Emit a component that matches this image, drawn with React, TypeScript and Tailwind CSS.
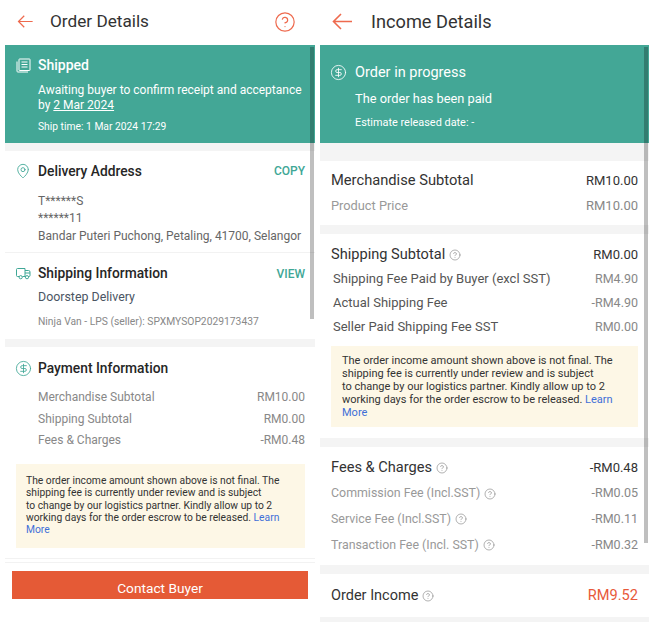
import { CircleDollarSign, CircleHelp, MapPin } from "lucide-react";
import type { ReactNode } from "react";

const font = "font-['Roboto','Liberation_Sans',sans-serif]";

function BackArrow({ className }: { className: string }) {
  return (
    <svg className={`text-[#ee6a4e] ${className}`} viewBox="0 0 20 17" fill="none" stroke="currentColor" strokeWidth="1.6">
      <path d="M20 8.5H1.5M9 1L1.5 8.5L9 16" />
    </svg>
  );
}

function Notice({ className }: { className: string }) {
  return (
    <div className={`bg-[#fdf7e6] text-[#333] ${className}`}>
      <p>The order income amount shown above is not final. The</p>
      <p>shipping fee is currently under review and is subject</p>
      <p>to change by our logistics partner. Kindly allow up to 2</p>
      <p>
        working days for the order escrow to be released. <span className="text-[#3f6fd8]">Learn</span>
      </p>
      <p className="text-[#3f6fd8]">More</p>
    </div>
  );
}

function DocIcon() {
  return (
    <svg width="15" height="15" viewBox="0 0 15 15" fill="none" stroke="currentColor" strokeWidth="1">
      <rect x="3" y="1" width="11" height="11.5" rx="0.5" />
      <path d="M1 3.5V13.2a.8.8 0 0 0 .8.8H12" />
      <path d="M5.5 4h6M5.5 6.5h6M5.5 9h6" />
    </svg>
  );
}

function TruckIcon() {
  return (
    <svg width="15" height="12" viewBox="0 0 15 12" fill="none" stroke="currentColor" strokeWidth="1">
      <path d="M3 8.5H1.5a1 1 0 0 1-1-1V1.5a1 1 0 0 1 1-1H9v8H6.5" />
      <path d="M9 2.5h3.5a1.5 1.5 0 0 1 1.5 1.5v3.5a1 1 0 0 1-1 1h-.5M9.5 8.5H9M9 5h5" />
      <circle cx="4.7" cy="9.2" r="1.6" />
      <circle cx="11" cy="9.2" r="1.6" />
    </svg>
  );
}

function SectionTitle({ icon, title, action }: { icon: ReactNode; title: string; action?: string }) {
  return (
    <div className="flex items-center">
      <span className="flex w-[22px] text-[#3fa796]">{icon}</span>
      <span className="text-[13.8px] font-medium text-[#262626]">{title}</span>
      {action && <span className="ml-auto text-xs font-medium text-[#3fa796]">{action}</span>}
    </div>
  );
}

function Row({ label, value }: { label: string; value: string }) {
  return (
    <div className="flex h-[21.5px] items-center justify-between text-xs text-[#888]">
      <span>{label}</span>
      <span>{value}</span>
    </div>
  );
}

function OrderDetails() {
  return (
    <div className="relative h-[622px] w-[320px] shrink-0 overflow-hidden pr-[5px]">
      <div className="flex h-[43px] items-center pl-[17px] pr-[19px]">
        <BackArrow className="h-[13px] w-[16px]" />
        <h1 className="ml-[17px] text-[17.2px] text-[#333]">Order Details</h1>
        <CircleHelp className="ml-auto size-[22px] text-[#ee6a4e]" strokeWidth={1.3} />
      </div>
      <div className="ml-[5px] mt-[2px] flex h-[98px] flex-col bg-[#43a796] pl-[11px] pt-[10px] text-white">
        <div className="flex items-center">
          <DocIcon />
          <span className="ml-[7px] text-sm font-medium">Shipped</span>
        </div>
        <p className="mt-[8px] pl-[22px] text-xs leading-[15px]">
          Awaiting buyer to confirm receipt and acceptance
          <br />
          by <span className="underline">2 Mar 2024</span>
        </p>
        <p className="mt-[6px] pl-[22px] text-[10.3px]">Ship time: 1 Mar 2024 17:29</p>
      </div>
      <div className="ml-[5px] h-[8px] bg-[#f4f4f4]" />
      <div className="ml-[5px] pl-[11px] pr-[10px] pt-[10px]">
        <SectionTitle icon={<MapPin className="-ml-px size-4" strokeWidth={1.3} />} title="Delivery Address" action="COPY" />
        <div className="mt-[11px] pl-[22px] text-xs leading-[17.5px] text-[#666]">
          <p>T******S</p>
          <p>******11</p>
          <p>Bandar Puteri Puchong, Petaling, 41700, Selangor</p>
        </div>
      </div>
      <div className="ml-[5px] mt-[7px] border-t border-[#f2f2f2] pl-[11px] pr-[10px] pt-[10px]">
        <SectionTitle icon={<TruckIcon />} title="Shipping Information" action="VIEW" />
        <p className="mt-[4px] pl-[22px] text-[12.4px] text-[#4b5563]">Doorstep Delivery</p>
        <p className="mt-[8px] pl-[22px] text-[10.3px] text-[#888]">Ninja Van - LPS (seller): SPXMYSOP2029173437</p>
      </div>
      <div className="ml-[5px] mt-[9px] h-[8px] bg-[#f4f4f4]" />
      <div className="ml-[5px] pl-[11px] pr-[10px] pt-[11px]">
        <SectionTitle icon={<CircleDollarSign className="-ml-px size-[17px]" strokeWidth={1.2} />} title="Payment Information" />
        <div className="mt-[8px] pl-[22px]">
          <Row label="Merchandise Subtotal" value="RM10.00" />
          <Row label="Shipping Subtotal" value="RM0.00" />
          <Row label="Fees & Charges" value="-RM0.48" />
        </div>
        <Notice className="mt-[13px] px-[10px] py-[11px] text-[10.3px] leading-[12.3px]" />
      </div>
      <div className="ml-[5px] mt-[10px] h-[5px] border-y border-[#f2f2f2]" />
      <div className="ml-[12px] mr-[7px] mt-[8px] flex h-[28px] items-end justify-center bg-[#e55a36] text-[13.7px] text-white">
        Contact Buyer
      </div>
      <div className="absolute left-[310px] top-[47px] h-[272px] w-[4px] bg-black/25" />
    </div>
  );
}

function IncomeRow({ label, value }: { label: string; value: string }) {
  return (
    <div className="flex h-[25.6px] items-center justify-between text-[12.4px] text-[#999]">
      <span className="flex items-center gap-1">
        {label}
        <CircleHelp className="size-3 text-[#888]" strokeWidth={1.3} />
      </span>
      <span className="text-[12.5px] text-[#888]">{value}</span>
    </div>
  );
}

function IncomeDetails() {
  return (
    <div className="relative h-[622px] w-[329px] shrink-0 overflow-hidden">
      <div className="flex h-[43px] items-center pl-[12px]">
        <BackArrow className="h-[17px] w-[20px]" />
        <h1 className="ml-[19px] text-[18.2px] text-[#333]">Income Details</h1>
      </div>
      <div className="mt-[2px] flex h-[98px] flex-col bg-[#43a796] pl-[10px] pt-[17px] text-white">
        <div className="flex items-center">
          <CircleDollarSign className="size-[17px]" strokeWidth={1.2} />
          <span className="ml-[8px] text-[14.5px]">Order in progress</span>
        </div>
        <p className="mt-[5px] pl-[25px] text-[12.8px]">The order has been paid</p>
        <p className="mt-[7px] pl-[25px] text-[10.9px]">Estimate released date: -</p>
      </div>
      <div className="h-[18px] bg-[#f4f4f4]" />
      <div className="px-[11px] py-[7px]">
        <div className="flex h-[25px] items-center justify-between text-[14.7px] text-[#333]">
          <span>Merchandise Subtotal</span>
          <span className="text-[13px]">RM10.00</span>
        </div>
        <div className="flex h-[25px] items-center justify-between text-[12.8px] text-[#999]">
          <span>Product Price</span>
          <span className="text-[13px] text-[#888]">RM10.00</span>
        </div>
      </div>
      <div className="h-[9px] bg-[#f4f4f4]" />
      <div className="px-[11px] pt-[9px]">
        <div className="flex h-[24px] items-center justify-between text-[14.6px] text-[#333]">
          <span className="flex items-center gap-1">
            Shipping Subtotal
            <CircleHelp className="size-3 text-[#888]" strokeWidth={1.3} />
          </span>
          <span className="text-[13px]">RM0.00</span>
        </div>
        <div className="pl-[2px]">
          {[
            ["Shipping Fee Paid by Buyer (excl SST)", "RM4.90"],
            ["Actual Shipping Fee", "-RM4.90"],
            ["Seller Paid Shipping Fee SST", "RM0.00"],
          ].map(([label, value]) => (
            <div key={label} className="flex h-[24px] items-center justify-between text-[13px] text-[#555]">
              <span>{label}</span>
              <span className="text-[12.5px] text-[#888]">{value}</span>
            </div>
          ))}
        </div>
        <Notice className="mt-[7px] px-[11px] py-[8px] text-[11px] leading-[13px]" />
      </div>
      <div className="mt-[11px] h-[9px] bg-[#f4f4f4]" />
      <div className="px-[11px] pt-[8px]">
        <div className="flex h-[26px] items-center justify-between text-[14.6px] text-[#333]">
          <span className="flex items-center gap-1">
            Fees & Charges
            <CircleHelp className="size-3 text-[#888]" strokeWidth={1.3} />
          </span>
          <span className="text-[13px]">-RM0.48</span>
        </div>
        <IncomeRow label="Commission Fee (Incl.SST)" value="-RM0.05" />
        <IncomeRow label="Service Fee (Incl.SST)" value="-RM0.11" />
        <IncomeRow label="Transaction Fee (Incl. SST)" value="-RM0.32" />
      </div>
      <div className="mt-[7px] h-[9px] bg-[#f4f4f4]" />
      <div className="flex h-[43px] items-center justify-between px-[11px] pt-[2px]">
        <span className="flex items-center gap-1 text-[14.5px] text-[#333]">
          Order Income
          <CircleHelp className="size-3 text-[#888]" strokeWidth={1.3} />
        </span>
        <span className="text-[14.6px] text-[#e8593a]">RM9.52</span>
      </div>
      <div className="h-[5px] bg-[#f4f4f4]" />
      <div className="absolute left-[324px] top-[47px] h-[496px] w-[4px] bg-black/25" />
    </div>
  );
}

export default function App() {
  return (
    <div className={`flex h-[622px] w-[660px] overflow-hidden bg-white ${font}`}>
      <OrderDetails />
      <IncomeDetails />
    </div>
  );
}
